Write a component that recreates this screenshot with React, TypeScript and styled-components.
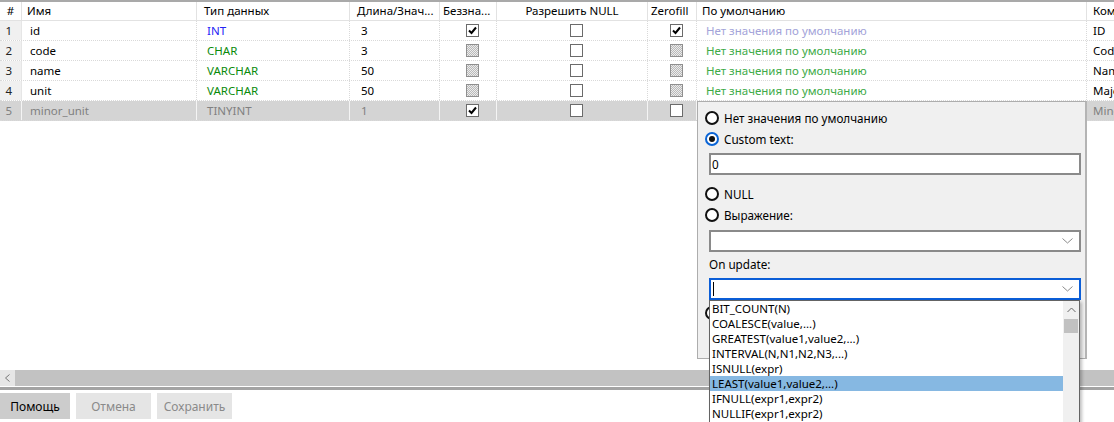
import styled, { createGlobalStyle } from 'styled-components';

const GlobalStyle = createGlobalStyle`
    html, body {
        margin: 0;
        padding: 0;
        background: #fff;
    }
    body {
        font-family: 'Segoe UI', 'Noto Sans', sans-serif;
        font-size: 11.5px;
        color: #000;
    }
`;

const GRID = '22px 175px 153px 90px 57px 151px 49px 390px 140px';

const Page = styled.div`
    position: relative;
    width: 1114px;
    height: 422px;
    overflow: hidden;
    display: flex;
    flex-direction: column;
`;

const Table = styled.div`
    flex: 1;
    overflow: hidden;
    background: #fff;
`;

const HeadRow = styled.div`
    display: grid;
    grid-template-columns: ${GRID};
    height: 21px;
    box-sizing: border-box;
    border-top: 2px solid #a9a9a9;
    border-bottom: 1px solid #e2e2e2;
`;

const HeadCell = styled.div<{ $align?: string; $pad?: number }>`
    box-sizing: border-box;
    border-right: 1px solid #e2e2e2;
    padding-left: ${({ $pad }) => $pad ?? 5}px;
    text-align: ${({ $align }) => $align || 'left'};
    line-height: 17px;
    white-space: nowrap;
    overflow: hidden;
`;

const Row = styled.div<{ $selected?: boolean }>`
    display: grid;
    grid-template-columns: ${GRID};
    height: 20px;
    box-sizing: border-box;
    border-bottom: 1px dotted #d9d9d9;
    background: ${({ $selected }) => ($selected ? '#d4d4d4' : '#fff')};
    color: ${({ $selected }) => ($selected ? '#808080' : '#000')};
`;

const Cell = styled.div<{ $pad?: number; $color?: string; $center?: boolean; $selected?: boolean }>`
    box-sizing: border-box;
    border-right: 1px ${({ $selected }) => ($selected ? 'solid #f4f4f4' : 'dotted #d9d9d9')};
    padding-left: ${({ $pad }) => $pad ?? 8}px;
    line-height: 19px;
    white-space: nowrap;
    overflow: hidden;
    color: ${({ $color }) => $color || 'inherit'};
    display: ${({ $center }) => ($center ? 'flex' : 'block')};
    align-items: center;
    justify-content: center;
`;

const NumCell = styled.div<{ $selected?: boolean }>`
    box-sizing: border-box;
    background: ${({ $selected }) => ($selected ? '#d4d4d4' : '#f0f0f0')};
    border-right: 1px solid ${({ $selected }) => ($selected ? '#f4f4f4' : '#e6e6e6')};
    text-align: right;
    padding-right: 9px;
    line-height: 19px;
    color: ${({ $selected }) => ($selected ? '#808080' : '#222')};
`;

const Box = styled.span<{ $state: 'on' | 'off' | 'dis' }>`
    display: inline-flex;
    align-items: center;
    justify-content: center;
    width: 13px;
    height: 13px;
    box-sizing: border-box;
    border: 1px solid ${({ $state }) => ($state === 'dis' ? '#8f8f8f' : '#6b6b6b')};
    background: ${({ $state }) =>
        $state === 'dis' ? 'repeating-conic-gradient(#b9b9b9 0 25%, #ececec 0 50%) 0 0 / 2px 2px' : '#fff'};
`;

const CheckBox = ({ state }: { state: 'on' | 'off' | 'dis' }) => (
    <Box $state={state}>
        {state === 'on' && (
            <svg width="9" height="9" viewBox="0 0 9 9">
                <path d="M1 4.5 L3.5 7 L8 1.5" fill="none" stroke="#000" strokeWidth="2" />
            </svg>
        )}
    </Box>
);

const HScroll = styled.div`
    height: 16px;
    display: flex;
    background: #c2c2c2;
    flex-shrink: 0;
`;

const ScrollArrow = styled.div`
    width: 15px;
    display: flex;
    align-items: center;
    justify-content: center;
    background: #e6e6e6;
`;

const Divider = styled.div`
    height: 3px;
    flex-shrink: 0;
    border-top: 1px solid #ffffff;
    background: #a3a3a3;
`;

const Footer = styled.div`
    height: 32px;
    flex-shrink: 0;
    display: flex;
    gap: 6px;
    padding-top: 3px;
    box-sizing: border-box;
    background: #fff;
`;

const Button = styled.button<{ $active?: boolean; $w: number }>`
    width: ${({ $w }) => $w}px;
    height: 26px;
    border: none;
    padding: 0;
    font-family: inherit;
    font-size: 12px;
    background: ${({ $active }) => ($active ? '#cccccc' : '#e5e5e5')};
    color: ${({ $active }) => ($active ? '#000' : '#8a8a8a')};
`;

/* popup editor for the default value */

const Popup = styled.div`
    position: absolute;
    left: 697px;
    top: 101px;
    width: 390px;
    height: 258px;
    box-sizing: border-box;
    background: #f0f0f0;
    border: 1px solid #adadad;
    border-right: 2px solid #b4b4b4;
    padding: 5px 0 0 7px;
    display: flex;
    flex-direction: column;
    font-size: 11.7px;
`;

const RadioRow = styled.div<{ $mt?: number }>`
    display: flex;
    align-items: center;
    gap: 5px;
    height: 21px;
    margin-top: ${({ $mt }) => $mt ?? 0}px;
    white-space: nowrap;
`;

const Radio = styled.span<{ $checked?: boolean }>`
    width: 14px;
    height: 14px;
    box-sizing: border-box;
    border-radius: 50%;
    border: 2px solid ${({ $checked }) => ($checked ? '#0a64d6' : '#111')};
    background: #fff;
    display: flex;
    align-items: center;
    justify-content: center;

    &::after {
        content: '';
        width: 6px;
        height: 6px;
        border-radius: 50%;
        background: ${({ $checked }) => ($checked ? '#111' : 'transparent')};
    }
`;

const Field = styled.div<{ $mt: number; $focus?: boolean }>`
    position: relative;
    margin: ${({ $mt }) => $mt}px 0 0 4px;
    width: 372px;
    height: 22px;
    box-sizing: border-box;
    border: 2px solid ${({ $focus }) => ($focus ? '#0b5ed7' : '#8a8a8a')};
    background: #fff;
    display: flex;
    align-items: center;
    padding-left: 1px;
`;

const Chevron = styled.span`
    position: absolute;
    right: 6px;
    top: 6px;
    display: flex;
`;

const Caret = styled.span`
    width: 1px;
    height: 14px;
    background: #000;
    margin-left: 1px;
`;

const Label = styled.div`
    margin: 4px 0 0 4px;
    line-height: 16px;
`;

const List = styled.div`
    position: absolute;
    left: -2px;
    top: 20px;
    width: 371px;
    height: 130px;
    box-sizing: border-box;
    background: #fff;
    border: 1px solid #646464;
    box-shadow: 2px 2px 3px rgba(0, 0, 0, 0.25);
    z-index: 2;
    display: flex;
    font-size: 11.5px;
`;

const Items = styled.div`
    flex: 1;
    display: flex;
    flex-direction: column;
`;

const Item = styled.div<{ $hl?: boolean }>`
    height: 15px;
    line-height: 15px;
    padding-left: 2px;
    white-space: nowrap;
    background: ${({ $hl }) => ($hl ? '#86b8e2' : 'transparent')};
`;

const VScroll = styled.div`
    width: 16px;
    background: #f0f0f0;
    display: flex;
    flex-direction: column;
    align-items: center;
`;

const Thumb = styled.div`
    width: 14px;
    height: 14px;
    margin-top: 3px;
    background: #c1c1c1;
`;

const ChevronDown = () => (
    <svg width="11" height="6" viewBox="0 0 11 6">
        <polyline points="0.5,0.5 5.5,5 10.5,0.5" fill="none" stroke="#8a8a8a" strokeWidth="1" />
    </svg>
);

type Col = { name: string; type: string; typeColor: string; len: string; unsigned: 'on' | 'off' | 'dis'; zerofill: 'on' | 'off' | 'dis'; def: string; defColor: string; comment: string };

const rows: Col[] = [
    { name: 'id', type: 'INT', typeColor: '#2424f5', len: '3', unsigned: 'on', zerofill: 'on', def: 'Нет значения по умолчанию', defColor: '#a3a3d9', comment: 'ID' },
    { name: 'code', type: 'CHAR', typeColor: '#0a8a0a', len: '3', unsigned: 'dis', zerofill: 'dis', def: 'Нет значения по умолчанию', defColor: '#3daa47', comment: 'Code' },
    { name: 'name', type: 'VARCHAR', typeColor: '#0a8a0a', len: '50', unsigned: 'dis', zerofill: 'dis', def: 'Нет значения по умолчанию', defColor: '#3daa47', comment: 'Name' },
    { name: 'unit', type: 'VARCHAR', typeColor: '#0a8a0a', len: '50', unsigned: 'dis', zerofill: 'dis', def: 'Нет значения по умолчанию', defColor: '#3daa47', comment: 'Major' },
    { name: 'minor_unit', type: 'TINYINT', typeColor: '#808080', len: '1', unsigned: 'on', zerofill: 'off', def: '', defColor: '#808080', comment: 'Minor' },
];

const functions = [
    'BIT_COUNT(N)',
    'COALESCE(value,...)',
    'GREATEST(value1,value2,...)',
    'INTERVAL(N,N1,N2,N3,...)',
    'ISNULL(expr)',
    'LEAST(value1,value2,...)',
    'IFNULL(expr1,expr2)',
    'NULLIF(expr1,expr2)',
    'IF(expr1,expr2,expr3)',
];

const App = () => {
    return (
        <Page>
            <GlobalStyle />
            <Table>
                <HeadRow>
                    <HeadCell $align="center" $pad={0}>#</HeadCell>
                    <HeadCell>Имя</HeadCell>
                    <HeadCell $pad={7}>Тип данных</HeadCell>
                    <HeadCell $pad={7}>Длина/Знач...</HeadCell>
                    <HeadCell $pad={3}>Беззна...</HeadCell>
                    <HeadCell $align="center" $pad={0}>Разрешить NULL</HeadCell>
                    <HeadCell $pad={3}>Zerofill</HeadCell>
                    <HeadCell>По умолчанию</HeadCell>
                    <HeadCell $pad={6}>Комментарий</HeadCell>
                </HeadRow>
                {rows.map((r, i) => {
                    const sel = i === 4;
                    return (
                        <Row key={r.name} $selected={sel}>
                            <NumCell $selected={sel}>{i + 1}</NumCell>
                            <Cell $selected={sel}>{r.name}</Cell>
                            <Cell $selected={sel} $pad={10} $color={r.typeColor}>{r.type}</Cell>
                            <Cell $selected={sel} $pad={11}>{r.len}</Cell>
                            <Cell $selected={sel} $center>
                                <CheckBox state={r.unsigned} />
                            </Cell>
                            <Cell $selected={sel} $center>
                                <CheckBox state="off" />
                            </Cell>
                            <Cell $selected={sel} $center>
                                <CheckBox state={r.zerofill} />
                            </Cell>
                            <Cell $selected={sel} $pad={9} $color={r.defColor}>{r.def}</Cell>
                            <Cell $selected={sel} $pad={6}>{r.comment}</Cell>
                        </Row>
                    );
                })}
            </Table>
            <HScroll>
                <ScrollArrow>
                    <svg width="5" height="8" viewBox="0 0 5 8">
                        <polyline points="4.5,0.5 0.5,4 4.5,7.5" fill="none" stroke="#777" strokeWidth="1" />
                    </svg>
                </ScrollArrow>
            </HScroll>
            <Divider />
            <Footer>
                <Button $active $w={70}>Помощь</Button>
                <Button $w={75}>Отмена</Button>
                <Button $w={75}>Сохранить</Button>
            </Footer>

            <Popup>
                <RadioRow>
                    <Radio />
                    Нет значения по умолчанию
                </RadioRow>
                <RadioRow>
                    <Radio $checked />
                    Custom text:
                </RadioRow>
                <Field $mt={4}>0</Field>
                <RadioRow $mt={8}>
                    <Radio />
                    NULL
                </RadioRow>
                <RadioRow>
                    <Radio />
                    Выражение:
                </RadioRow>
                <Field $mt={5}>
                    <Chevron>
                        <ChevronDown />
                    </Chevron>
                </Field>
                <Label>On update:</Label>
                <Field $mt={6} $focus>
                    <Caret />
                    <Chevron>
                        <ChevronDown />
                    </Chevron>
                    <List>
                        <Items>
                            {functions.map((f) => (
                                <Item key={f} $hl={f.startsWith('LEAST')}>
                                    {f}
                                </Item>
                            ))}
                        </Items>
                        <VScroll>
                            <svg width="9" height="12" viewBox="0 0 9 12" style={{ marginTop: 3 }}>
                                <polyline points="0.5,8 4.5,4 8.5,8" fill="none" stroke="#666" strokeWidth="1" />
                            </svg>
                            <Thumb />
                        </VScroll>
                    </List>
                </Field>
                {/* last option sits under the open list; only its radio edge shows */}
                <RadioRow $mt={2}>
                    <Radio />
                </RadioRow>
            </Popup>
        </Page>
    );
};

export default App;
